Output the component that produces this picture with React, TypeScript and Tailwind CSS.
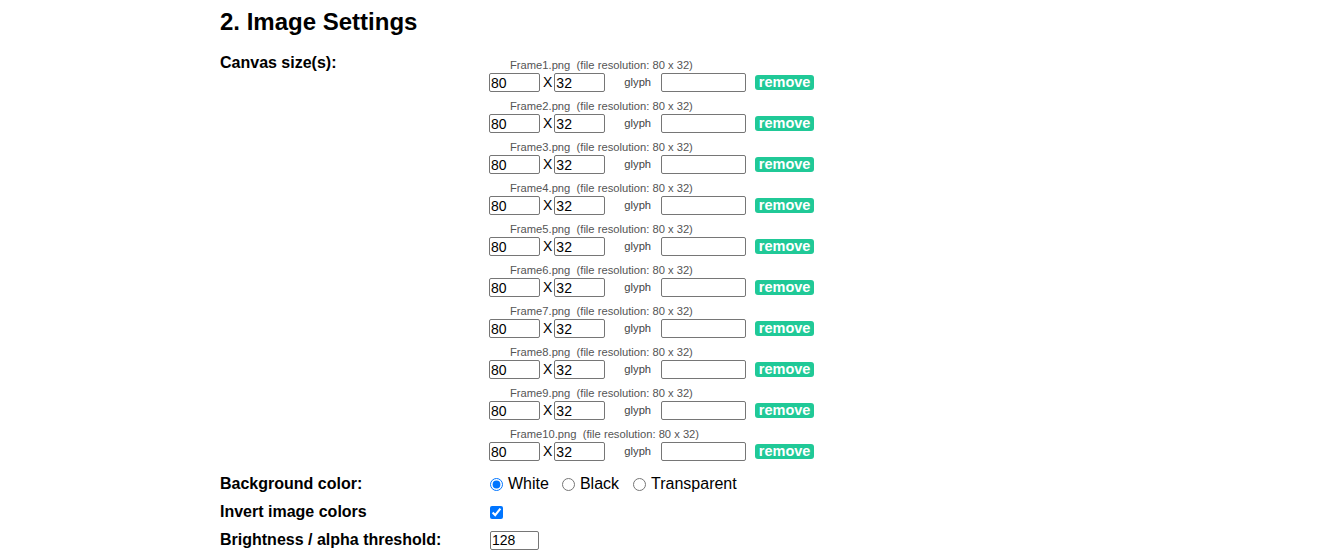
import React from 'react';

const frames = Array.from({ length: 10 }, (_, i) => `Frame${i + 1}.png`);

function FrameRow({ name }: { name: string }) {
  return (
    <div className="mb-[8px]">
      <div className="ml-[21px] h-[14px] whitespace-pre text-[11.2px] leading-[13px] text-[#555]">
        {name}{'  '}(file resolution: 80 x 32)
      </div>
      <div className="flex h-[19px] items-center">
        <input
          defaultValue="80"
          className="h-[19px] w-[51px] rounded-[2px] border border-[#767676] px-[1px] text-[14px] leading-[15px]"
        />
        <span className="ml-[3px] mr-[2px] text-[14px]">X</span>
        <input
          defaultValue="32"
          className="h-[19px] w-[51px] rounded-[2px] border border-[#767676] px-[1px] text-[14px] leading-[15px]"
        />
        <span className="ml-[19px] text-[11.2px] text-[#444]">glyph</span>
        <input className="ml-[10px] h-[19px] w-[85px] rounded-[2px] border border-[#767676] px-[1px] text-[14px]" />
        <button className="ml-[9px] h-[15px] w-[59px] rounded-[3px] bg-[#20c997] text-[14.5px] font-bold leading-[15px] text-white">
          remove
        </button>
      </div>
    </div>
  );
}

export default function App() {
  return (
    <div className="min-h-screen bg-white pl-[220px] font-['Liberation_Sans',Arial,sans-serif] text-black">
      <h2 className="pt-[8px] text-[24px] font-bold leading-[28px]">2. Image Settings</h2>

      <div className="mt-[18px] grid grid-cols-[269px_1fr]">
        {/* Canvas sizes */}
        <div className="text-[16px] font-bold leading-[18px]">Canvas size(s):</div>
        <div className="pt-[5px]">
          {frames.map(f => (
            <FrameRow key={f} name={f} />
          ))}
        </div>

        {/* Background color */}
        <div className="mt-[1px] h-[28px] text-[16px] font-bold leading-[28px]">Background color:</div>
        <div className="mt-[1px] flex h-[28px] items-center text-[16px]">
          <label className="flex items-center">
            <input type="radio" name="bg" defaultChecked className="ml-[1px] mr-[5px] h-[13px] w-[13px]" />
            White
          </label>
          <label className="ml-[13px] flex items-center">
            <input type="radio" name="bg" className="mr-[5px] h-[13px] w-[13px]" />
            Black
          </label>
          <label className="ml-[14px] flex items-center">
            <input type="radio" name="bg" className="mr-[5px] h-[13px] w-[13px]" />
            Transparent
          </label>
        </div>

        {/* Invert */}
        <div className="h-[28px] text-[16px] font-bold leading-[28px]">Invert image colors</div>
        <div className="flex h-[28px] items-center">
          <input type="checkbox" defaultChecked className="ml-[1px] h-[13px] w-[13px]" />
        </div>

        {/* Threshold */}
        <div className="h-[28px] text-[16px] font-bold leading-[28px]">Brightness / alpha threshold:</div>
        <div className="flex h-[28px] items-center">
          <input
            defaultValue="128"
            className="ml-[1px] h-[19px] w-[49px] rounded-[2px] border border-[#767676] px-[1px] text-[14px] leading-[15px]"
          />
        </div>
      </div>
    </div>
  );
}
